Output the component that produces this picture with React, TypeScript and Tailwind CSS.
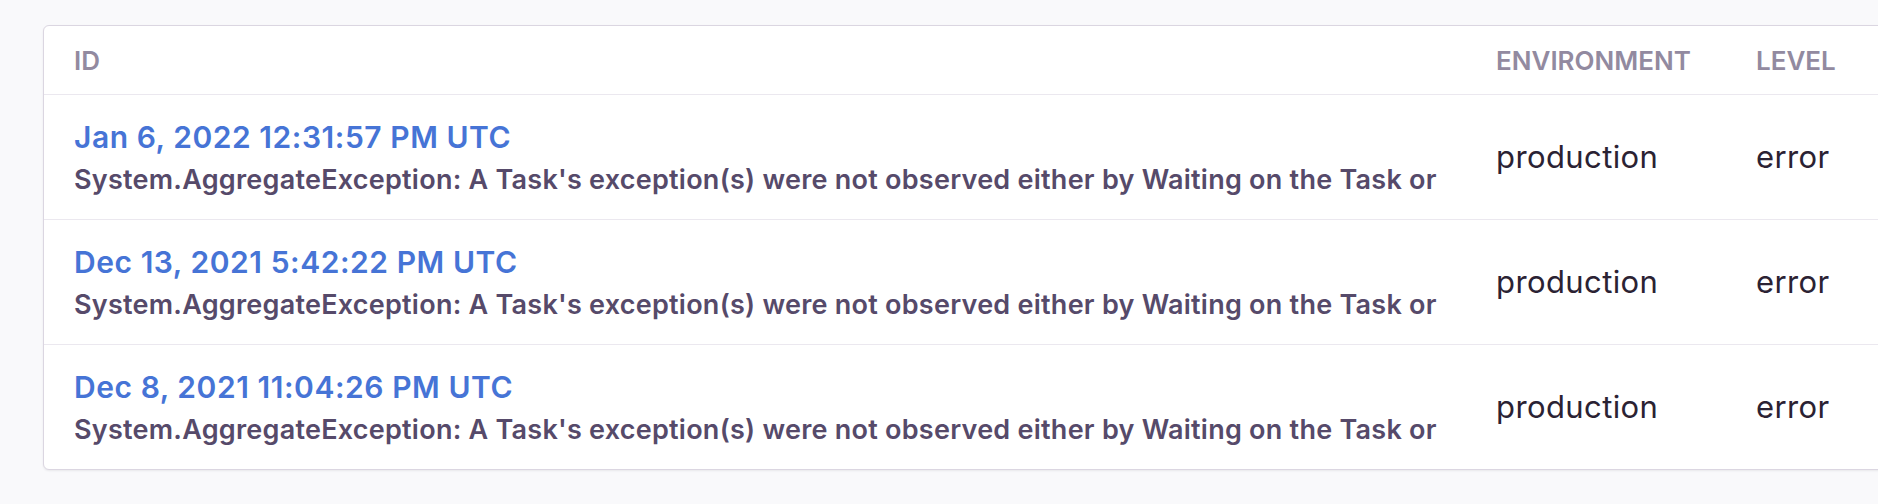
import React from "react";

const rows = [
  { date: "Jan 6, 2022 12:31:57 PM UTC" },
  { date: "Dec 13, 2021 5:42:22 PM UTC" },
  { date: "Dec 8, 2021 11:04:26 PM UTC" },
];

const msg =
  "System.AggregateException: A Task's exception(s) were not observed either by Waiting on the Task or";

export default function App() {
  return (
    <div
      className="w-[1878px] h-[504px] overflow-hidden bg-[#f9f9fb] pt-[25px] pl-[43px]"
      style={{ fontFamily: "Inter, 'Noto Sans', sans-serif" }}
    >
      <div className="w-[1880px] bg-white border border-[#dbd6e1] rounded-[6px] shadow-[0_1px_2px_rgba(43,34,51,0.08)]">
        <div className="grid grid-cols-[1422px_260px_1fr] h-[69px] items-center border-b border-[#ebe8ef] text-[26px] font-semibold uppercase text-[#928aa0]">
          <div className="pl-[30px]">ID</div>
          <div className="pl-[30px]">Environment</div>
          <div className="pl-[30px]">Level</div>
        </div>
        {rows.map((r, i) => (
          <div
            key={i}
            className={
              "grid grid-cols-[1422px_260px_1fr] items-center " +
              (i < rows.length - 1 ? "border-b border-[#ebe8ef]" : "")
            }
          >
            <div className="pl-[30px] pt-[24px] pb-[21px] whitespace-nowrap overflow-hidden">
              <div className="text-[30px] leading-[36px] font-semibold tracking-[0.55px] text-[#4674d6]">
                {r.date}
              </div>
              <div className="mt-[7px] text-[27px] leading-[36px] font-semibold tracking-[0.25px] text-[#564a6a]">
                {msg}
              </div>
            </div>
            <div className="pl-[30px] text-[31px] tracking-[0.4px] text-[#2b2233]">production</div>
            <div className="pl-[30px] text-[31px] tracking-[0.4px] text-[#2b2233]">error</div>
          </div>
        ))}
      </div>
    </div>
  );
}
